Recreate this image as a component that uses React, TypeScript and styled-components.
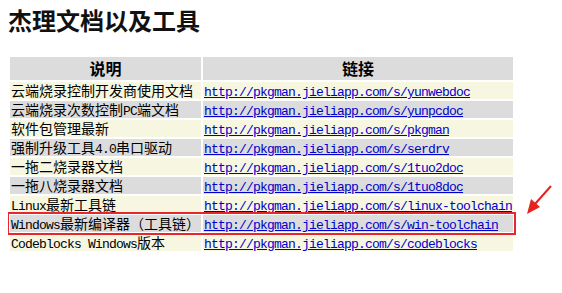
import React from "react";
import styled, { createGlobalStyle } from "styled-components";

type Doc = { name: string; slug: string; marked?: boolean };

const docs: Doc[] = [
  { name: "云端烧录控制开发商使用文档", slug: "yunwebdoc" },
  { name: "云端烧录次数控制PC端文档", slug: "yunpcdoc" },
  { name: "软件包管理最新", slug: "pkgman" },
  { name: "强制升级工具4.0串口驱动", slug: "serdrv" },
  { name: "一拖二烧录器文档", slug: "1tuo2doc" },
  { name: "一拖八烧录器文档", slug: "1tuo8doc" },
  { name: "Linux最新工具链", slug: "linux-toolchain" },
  { name: "Windows最新编译器（工具链）", slug: "win-toolchain", marked: true },
  { name: "Codeblocks Windows版本", slug: "codeblocks" },
];

// ascii runs get the narrow mono face, the rest stays CJK
const Mixed: React.FC<{ text: string }> = ({ text }) => {
  const parts = text.split(/([\x20-\x7e]+)/).filter(Boolean);
  return (
    <>
      {parts.map((p, i) =>
        /^[\x20-\x7e]+$/.test(p) ? <Latin key={i}>{p}</Latin> : <span key={i}>{p}</span>
      )}
    </>
  );
};

const App: React.FC = () => {
  return (
    <Page>
      <GlobalStyle />
      <Title>杰理文档以及工具</Title>
      <DocTable>
        <thead>
          <tr>
            <HeadCell style={{ width: 191 }}>说明</HeadCell>
            <HeadCell>链接</HeadCell>
          </tr>
        </thead>
        <tbody>
          {docs.map((d, i) => {
            const url = `http://pkgman.jieliapp.com/s/${d.slug}`;
            return (
              <Row key={d.slug} $odd={i % 2 === 0} $marked={d.marked}>
                <Cell>
                  <Mixed text={d.name} />
                </Cell>
                <Cell>
                  <DocLink href={url}>{url}</DocLink>
                </Cell>
              </Row>
            );
          })}
        </tbody>
      </DocTable>
      <Arrow width="36" height="36" viewBox="0 0 36 36">
        <line x1="27" y1="5" x2="11" y2="23" stroke="#e5231f" strokeWidth="2" />
        <polygon points="3,33 7,18 16,26" fill="#e5231f" />
      </Arrow>
    </Page>
  );
};

export default App;

/* ================= styled ================= */

const GlobalStyle = createGlobalStyle`
  body {
    margin: 8px;
    background: #ffffff;
    color: #000000;
    font-family: "Noto Sans CJK SC", "Noto Sans", sans-serif;
  }
`;

const Page = styled.div`
  position: relative;
  width: 546px;
`;

const Title = styled.h1`
  margin: 0 0 23px 0;
  font-size: 24px;
  line-height: 24px;
  font-weight: 700;
  color: #111111;
`;

const DocTable = styled.table`
  width: 507px;
  border-collapse: separate;
  border-spacing: 2px;
  table-layout: fixed;
`;

const HeadCell = styled.th`
  background: #dcdcdc;
  height: 23px;
  padding: 0;
  font-size: 16px;
  line-height: 23px;
  font-weight: 700;
  text-align: center;
`;

const Row = styled.tr<{ $odd: boolean; $marked?: boolean }>`
  background: ${(p) => (p.$odd ? "#f6f6e1" : "#dcdcdc")};
  outline: ${(p) => (p.$marked ? "2px solid #e8262b" : "none")};
  outline-offset: 1px;
`;

const Cell = styled.td`
  height: 17px;
  padding: 0 0 0 1px;
  font-size: 14px;
  line-height: 17px;
  white-space: nowrap;
  color: #000000;
`;

const Latin = styled.span`
  font-family: "Liberation Mono", monospace;
  font-size: 13px;
  line-height: 11px;
  letter-spacing: -0.8px;
  white-space: pre;
`;

const DocLink = styled.a`
  font-family: "Liberation Mono", monospace;
  font-size: 13px;
  line-height: 11px;
  letter-spacing: -0.8px;
  color: #0000cc;
  text-decoration: underline;
`;

const Arrow = styled.svg`
  position: absolute;
  left: 516px;
  top: 173px;
`;
